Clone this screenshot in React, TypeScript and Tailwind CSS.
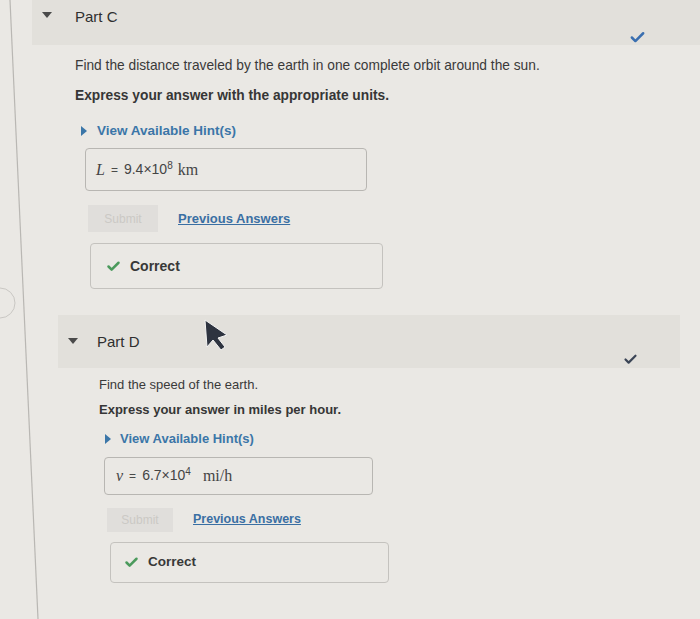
import { Check } from "lucide-react";

const sans = { fontFamily: '"Liberation Sans", Arial, sans-serif' };

const Caret = ({ dir }: { dir: "down" | "right" }) =>
  dir === "down" ? (
    <svg width="10" height="7" viewBox="0 0 10 7" className="shrink-0">
      <path d="M0 0 L10 0 L5 6 Z" fill="#4a4a4a" />
    </svg>
  ) : (
    <svg width="6" height="10" viewBox="0 0 6 10" className="shrink-0">
      <path d="M0 0 L6 5 L0 10 Z" fill="#3b76a8" />
    </svg>
  );

interface PartProps {
  label: string;
  question: string;
  instruction: string;
  variable: string;
  value: string;
  exp: string;
  unit: string;
  checkColor: string;
  variant: "C" | "D";
}

const Part = ({ label, question, instruction, variable, value, exp, unit, checkColor, variant }: PartProps) => {
  const isC = variant === "C";
  return (
    <div>
      {/* header band */}
      <div
        className={
          isC
            ? "relative flex h-[45px] items-start bg-[#e2e0db] pl-[10px] pt-[6px] ml-[32px]"
            : "relative flex h-[53px] items-center bg-[#e2e0db] pl-[10px] ml-[58px] mr-[20px]"
        }
      >
        <div className={isC ? "flex w-[33px] pt-[6px]" : "flex w-[29px]"}>
          <Caret dir="down" />
        </div>
        <span className="text-[15px] text-[#2f2f2f]" style={sans}>
          {label}
        </span>
        <Check
          size={isC ? 17 : 15}
          strokeWidth={3.5}
          color={checkColor}
          className={isC ? "absolute right-[54px] top-[29px]" : "absolute right-[42px] top-[37px]"}
        />
      </div>

      <div className={isC ? "pl-[75px] pt-[11px]" : "pl-[99px] pt-[9px]"} style={sans}>
        <p className={isC ? "text-[13.75px] leading-[20px] text-[#3a3a3a]" : "text-[13px] leading-[16px] text-[#3a3a3a]"}>
          {question}
        </p>
        <p
          className={
            isC
              ? "mt-[10px] text-[13.75px] font-bold leading-[20px] text-[#363636]"
              : "mt-[9px] text-[13px] font-bold leading-[16px] text-[#363636]"
          }
        >
          {instruction}
        </p>
        <div className={isC ? "mt-[15px] flex items-center gap-[10px] pl-[6px]" : "mt-[11px] flex items-center gap-[9px] pl-[6px]"}>
          <Caret dir="right" />
          <span className={isC ? "text-[13.5px] font-bold text-[#3b76a8]" : "text-[13px] font-bold text-[#3b76a8]"}>
            View Available Hint(s)
          </span>
        </div>

        <div
          className={
            isC
              ? "mt-[7px] ml-[10px] flex h-[43px] w-[282px] items-center rounded-[4px] border border-[#b8b6b2] pl-[10px]"
              : "mt-[8px] ml-[5px] flex h-[38px] w-[269px] items-center rounded-[4px] border border-[#b8b6b2] pl-[11px]"
          }
        >
          <span className="text-[16px] italic text-[#444]" style={{ fontFamily: '"Liberation Serif", serif' }}>
            {variable}
          </span>
          <span className="ml-[6px] text-[12px] text-[#4a4a4a]">=</span>
          <span className="ml-[6px] text-[14px] text-[#444]">
            {value}
            <sup className="text-[10px]">{exp}</sup>
          </span>
          <span
            className={isC ? "ml-[5px] text-[16px] text-[#444]" : "ml-[12px] text-[16px] text-[#444]"}
            style={{ fontFamily: '"Liberation Serif", serif' }}
          >
            {unit}
          </span>
        </div>

        <div className={isC ? "mt-[14px] ml-[13px] flex items-center" : "mt-[13px] ml-[8px] flex items-center"}>
          <div
            className={
              isC
                ? "flex h-[27px] w-[70px] items-center justify-center bg-[#e0dedb] text-[12px] text-[#cbc9c5]"
                : "flex h-[24px] w-[66px] items-center justify-center bg-[#e0dedb] text-[12px] text-[#cbc9c5]"
            }
          >
            Submit
          </div>
          <span className={isC ? "ml-[20px] text-[13px] font-bold text-[#3a6fa3] underline" : "ml-[20px] text-[12.5px] font-bold text-[#3a6fa3] underline"}>
            Previous Answers
          </span>
        </div>

        <div
          className={
            isC
              ? "mt-[11px] ml-[15px] flex h-[46px] w-[293px] items-center gap-[9px] rounded-[4px] border border-[#c4c2be] pl-[15px]"
              : "mt-[10px] ml-[11px] flex h-[41px] w-[279px] items-center gap-[9px] rounded-[4px] border border-[#c4c2be] pl-[13px]"
          }
        >
          <Check size={15} strokeWidth={4} color="#4b9a5c" />
          <span className={isC ? "text-[14px] font-bold text-[#383838]" : "text-[13.5px] font-bold text-[#383838]"}>
            Correct
          </span>
        </div>
      </div>
    </div>
  );
};

export default function App() {
  return (
    <div className="relative h-[619px] w-[700px] overflow-hidden bg-[#eae8e4]" style={sans}>
      <Part
        label="Part C"
        question="Find the distance traveled by the earth in one complete orbit around the sun."
        instruction="Express your answer with the appropriate units."
        variable="L"
        value="9.4×10"
        exp="8"
        unit="km"
        checkColor="#3a6fb0"
        variant="C"
      />
      <div className="h-[26px]" />
      <Part
        label="Part D"
        question="Find the speed of the earth."
        instruction="Express your answer in miles per hour."
        variable="v"
        value="6.7×10"
        exp="4"
        unit="mi/h"
        checkColor="#3b4556"
        variant="D"
      />

      {/* screen edge line and pointer drawn over the page */}
      <svg className="pointer-events-none absolute left-0 top-0" width="700" height="619">
        <line x1="10" y1="0" x2="38" y2="619" stroke="#b9b7b3" strokeWidth="1.2" />
        <path d="M0 288 A14 14 0 0 1 0 318" fill="none" stroke="#c9c7c3" strokeWidth="1" />
        <path d="M205 320 L207 347 L213 340 L221 350 L225 347 L218 338 L227 335 Z" fill="#2e3440" stroke="#f4f4f4" strokeWidth="1" />
      </svg>
    </div>
  );
}
